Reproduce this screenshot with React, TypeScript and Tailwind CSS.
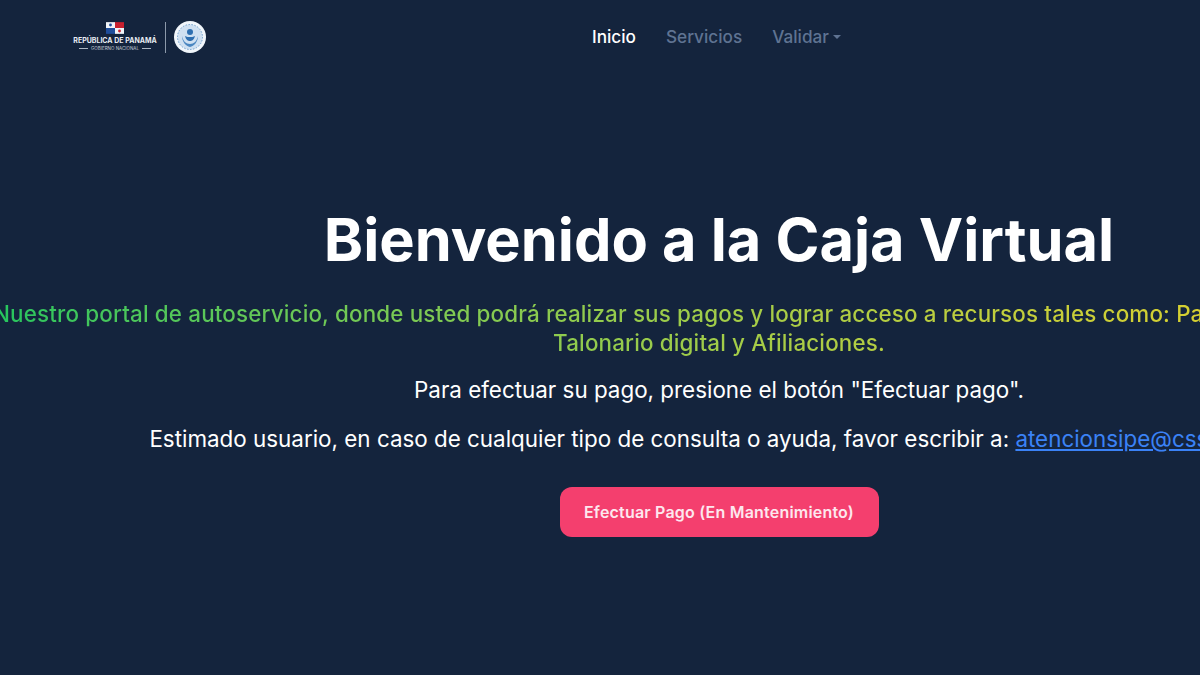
import React from "react";

const navLinks = [
  { label: "Inicio", cls: "text-white" },
  { label: "Servicios", cls: "text-[#5f7392]" },
];

function Logo() {
  return (
    <div className="flex items-center gap-[8px]">
      <div className="flex w-[84px] flex-col items-center">
        <svg width="18" height="12" viewBox="0 0 20 13">
          <rect width="10" height="6.5" fill="#f1f5f9" />
          <rect x="10" width="10" height="6.5" fill="#c8202f" />
          <rect y="6.5" width="10" height="6.5" fill="#1f4e9c" />
          <rect x="10" y="6.5" width="10" height="6.5" fill="#f1f5f9" />
          <circle cx="5" cy="3.2" r="1.6" fill="#1f4e9c" />
          <circle cx="15" cy="9.8" r="1.6" fill="#c8202f" />
        </svg>
        <span className="mt-[2px] whitespace-nowrap text-[7px] leading-[9px] font-bold text-[#e8ecf2]">REPÚBLICA DE PANAMÁ</span>
        <div className="flex items-center gap-[3px]">
          <span className="h-px w-[9px] bg-[#aab4c2]" />
          <span className="whitespace-nowrap text-[4.5px] leading-[7px] text-[#c6cdd8]">GOBIERNO NACIONAL</span>
          <span className="h-px w-[9px] bg-[#aab4c2]" />
        </div>
      </div>
      <div className="h-[31px] w-px bg-[#8c99aa]" />
      <svg width="32" height="32" viewBox="0 0 32 32">
        <circle cx="16" cy="16" r="16" fill="#f1f6fb" />
        <circle cx="16" cy="16" r="12.5" fill="#cfe0f1" />
        <circle cx="16" cy="16" r="12.5" fill="none" stroke="#6f9fcd" strokeWidth="1" strokeDasharray="1.5 1.5" />
        <circle cx="16" cy="11" r="3" fill="#2f6fb0" />
        <path d="M11 15c1 4 3 5 5 5s4-1 5-5l-2.500 1h-5z" fill="#2f6fb0" />
        <path d="M8 15c0 6 4 10 8 11 4-1 8-5 8-11-1 5-4 8-8 8s-7-3-8-8z" fill="#4a86c0" />
      </svg>
    </div>
  );
}

export default function App() {
  return (
    <div className="h-[675px] w-[1200px] overflow-hidden bg-[#14243d] font-['Inter',sans-serif]">
      <div className="w-[1438px]">
        <nav className="flex h-[74px] items-center">
          <div className="ml-[73px]">
            <Logo />
          </div>
          <ul className="ml-[386px] flex items-center gap-[30px] text-[17.2px] font-medium">
            {navLinks.map((l) => (
              <li key={l.label} className={l.cls}>
                {l.label}
              </li>
            ))}
            <li className="flex items-center gap-[4px] text-[#5f7392]">
              Validar
              <span className="mt-[1px] h-0 w-0 border-x-[4px] border-t-[4px] border-x-transparent border-t-[#5f7392]" />
            </li>
          </ul>
        </nav>

        <main className="flex flex-col items-center pt-[127px] text-center">
          <h1 className="text-[59.5px] leading-[76px] font-[650] whitespace-nowrap text-white">Bienvenido a la Caja Virtual</h1>
          <p className="mt-[22px] w-[1452px] shrink-0 bg-gradient-to-r from-[#22c55e] to-[#eed01a] bg-clip-text text-[22.4px] leading-[29px] font-medium tracking-[0.16px] whitespace-nowrap text-transparent">
            Nuestro portal de autoservicio, donde usted podrá realizar sus pagos y lograr acceso a recursos tales como: Paz y Salvo, Cotizaciones,
            <br />
            Talonario digital y Afiliaciones.
          </p>
          <p className="mt-[18px] text-[22.4px] leading-[29px] whitespace-nowrap text-white">Para efectuar su pago, presione el botón "Efectuar pago".</p>
          <p className="mt-[20px] text-[22.4px] leading-[29px] whitespace-nowrap text-white">
            Estimado usuario, en caso de cualquier tipo de consulta o ayuda, favor escribir a:{" "}
            <a href="#" className="text-[#3b82f6] underline">atencionsipe@css.gob.pa</a>
          </p>
          <button className="mt-[34px] h-[50px] w-[319px] rounded-[12px] bg-[#f43f6e] pb-[1px] text-[16px] font-semibold tracking-[0.2px] text-[#fde7ee]">
            Efectuar Pago (En Mantenimiento)
          </button>
        </main>
      </div>
    </div>
  );
}
